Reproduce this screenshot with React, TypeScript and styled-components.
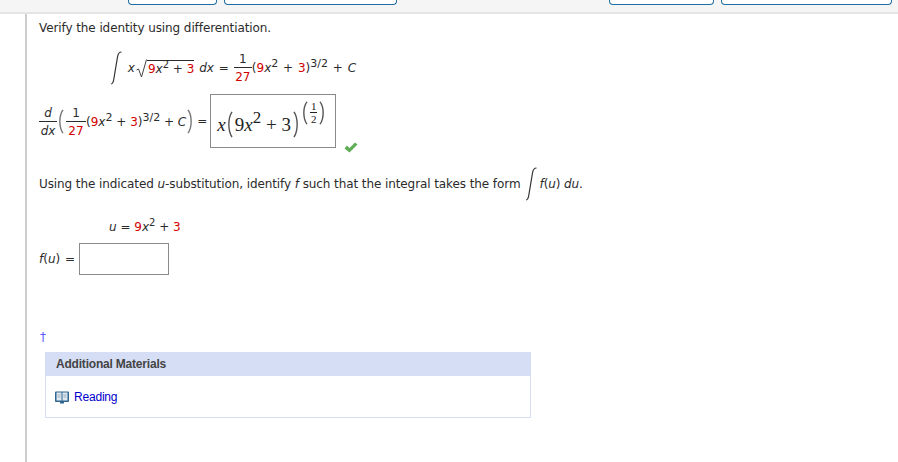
import styled, { createGlobalStyle } from 'styled-components';

const GlobalStyle = createGlobalStyle`
    html, body {
        margin: 0;
        padding: 0;
        background: #fff;
    }
    body {
        font-family: "DejaVu Sans", Verdana, sans-serif;
        font-size: 12px;
        color: #2b2b2b;
    }
`;

const Page = styled.div`
    width: 898px;
    height: 462px;
    overflow: hidden;
    display: flex;
    flex-direction: column;
`;

const TopBar = styled.div`
    height: 12px;
    flex: none;
    display: flex;
    background: #f5f5f5;
    border-bottom: 2px solid #e4e4e4;
`;

const Tab = styled.div<{ $width: number; $gap: number }>`
    width: ${({ $width }) => $width}px;
    height: 5px;
    margin-left: ${({ $gap }) => $gap}px;
    box-sizing: border-box;
    border: 1px solid #1f6fa6;
    border-top: none;
    border-radius: 0 0 4px 4px;
    background: #fff;
`;

const Body = styled.div`
    flex: 1;
    margin-left: 25px;
    border-left: 2px solid #cdcdcd;
    padding-left: 12px;
    display: flex;
    flex-direction: column;
    align-items: flex-start;
`;

const Prompt = styled.div<{ $top: number }>`
    margin-top: ${({ $top }) => $top}px;
    height: 20px;
    line-height: 20px;
    white-space: nowrap;
    display: flex;
    align-items: center;
    letter-spacing: -0.09px;
`;

const MathRow = styled.div<{ $top: number; $left: number; $height: number; $tight?: boolean }>`
    margin-top: ${({ $top }) => $top}px;
    margin-left: ${({ $left }) => $left}px;
    height: ${({ $height }) => $height}px;
    display: flex;
    align-items: center;
    white-space: pre;
    word-spacing: ${({ $tight }) => ($tight ? 0 : 1)}px;
`;

const Derivative = styled.span`
    display: inline-flex;
    align-items: center;
    margin-top: 2px;
    word-spacing: 0;
`;

const EqualSign = styled.span`
    margin-left: 4px;
`;

const Var = styled.i`
    font-style: italic;
`;

const Num = styled.span`
    color: #d40000;
`;

const Sup = styled.sup<{ $small?: boolean }>`
    font-size: ${({ $small }) => ($small ? 10 : 11)}px;
    line-height: 0;
    vertical-align: 5px;
`;

const Frac = styled.span<{ $width: number; $left?: number }>`
    display: inline-flex;
    flex-direction: column;
    align-items: stretch;
    text-align: center;
    line-height: 14px;
    width: ${({ $width }) => $width}px;
    margin-left: ${({ $left }) => $left ?? 0}px;
`;

const Numerator = styled.span`
    border-bottom: 1px solid #2b2b2b;
    padding-bottom: 1px;
`;

const Denominator = styled.span`
    padding-top: 2px;
`;

const RootGroup = styled.span`
    display: inline-flex;
    align-items: center;
    margin-left: 1px;
`;

const Radicand = styled.span`
    border-top: 1px solid #2b2b2b;
    padding: 1px 0 0 1px;
    line-height: 15px;
    word-spacing: 0;
`;

const AnswerBox = styled.div`
    box-sizing: border-box;
    width: 126px;
    height: 54px;
    margin-left: 3px;
    border: 1.5px solid #8a8a8a;
    display: flex;
    align-items: center;
    padding: 8px 0 0 6px;
    font-family: "Liberation Serif", "Times New Roman", serif;
    font-size: 19px;
    color: #222;
    white-space: pre;
    word-spacing: 0;
`;

const AnswerBase = styled.span`
    margin-left: 2px;
`;

const AnswerSup = styled.sup`
    font-size: 17px;
    line-height: 0;
    vertical-align: 8px;
`;

const AnswerExponent = styled.span`
    display: inline-flex;
    align-items: center;
    margin: -24px 0 0 3px;
`;

const HalfFrac = styled.span`
    display: inline-flex;
    flex-direction: column;
    text-align: center;
    font-size: 11px;
    line-height: 12px;
    margin: 0 2px;
`;

const HalfTop = styled.span`
    border-bottom: 1px solid #222;
    padding: 0 1px;
`;

const CheckMark = styled.svg`
    margin: 53px 0 0 8px;
    flex: none;
`;

const Blank = styled.div`
    box-sizing: border-box;
    width: 90px;
    height: 32px;
    margin-left: 4px;
    border: 1px solid #8a8a8a;
    background: #fff;
`;

const Dagger = styled.div`
    margin: 55px 0 0 1px;
    height: 14px;
    line-height: 14px;
    color: #5a5aff;
`;

const Materials = styled.div`
    margin: 8px 0 0 6px;
    width: 486px;
    height: 66px;
    box-sizing: border-box;
    border: 1px solid #d6def6;
    font-family: "Liberation Sans", Arial, sans-serif;
`;

const MaterialsTitle = styled.div`
    height: 23px;
    line-height: 23px;
    padding-left: 10px;
    background: #d6def6;
    font-weight: bold;
    font-size: 12px;
    letter-spacing: -0.2px;
    color: #444;
`;

const MaterialsBody = styled.div`
    display: flex;
    align-items: center;
    gap: 5px;
    padding: 13px 0 0 9px;
`;

const ReadingLink = styled.a`
    color: #0000cc;
    font-size: 12px;
    letter-spacing: -0.2px;
    line-height: 16px;
`;

const Integral = () => (
    <svg width="13" height="34" viewBox="0 0 13 34" style={{ flex: 'none' }}>
        <path d="M1 33 C3 33 3.5 31 4 27 L7.5 6 C8 2.5 9 1 11.5 1" fill="none" stroke="#333" strokeWidth="1.2" />
    </svg>
);

const Paren = ({ side, height, color, gap = 0 }: { side: 'l' | 'r'; height: number; color: string; gap?: number }) => (
    <svg
        width="6"
        height={height}
        viewBox="0 0 6 30"
        preserveAspectRatio="none"
        style={{ flex: 'none', marginLeft: gap }}
    >
        <path
            d={side === 'l' ? 'M5 1 C0.8 8 0.8 22 5 29' : 'M1 1 C5.2 8 5.2 22 1 29'}
            fill="none"
            stroke={color}
            strokeWidth="1.4"
        />
    </svg>
);

const RootSign = () => (
    <svg width="11" height="19" viewBox="0 0 11 19" style={{ flex: 'none', marginTop: 1 }}>
        <path d="M0.5 11 L2.5 10 L5.5 18 L10.5 0.5" fill="none" stroke="#444" strokeWidth="1" />
    </svg>
);

const BookIcon = () => (
    <svg width="14" height="13" viewBox="0 0 14 13">
        <rect x="0" y="0.5" width="14" height="10.5" rx="1" fill="#2f6690" />
        <rect x="1.5" y="1.5" width="5" height="8" fill="#dfe8ef" />
        <rect x="7.5" y="1.5" width="5" height="8" fill="#dfe8ef" />
        <path d="M2.5 4h3M2.5 6h3M8.5 4h3M8.5 6h3" stroke="#8aa2b4" strokeWidth="0.8" />
        <rect x="5" y="11" width="4" height="1.5" fill="#2f6690" />
    </svg>
);

const Polynomial = () => (
    <span>
        (<Num>9</Num><Var>x</Var><Sup>2</Sup> + <Num>3</Num>)<Sup>3/2</Sup> + <Var>C</Var>
    </span>
);

const App = () => (
    <Page>
        <GlobalStyle />
        <TopBar>
            <Tab $width={89} $gap={128} />
            <Tab $width={173} $gap={7} />
            <Tab $width={105} $gap={212} />
            <Tab $width={171} $gap={7} />
        </TopBar>
        <Body>
            <Prompt $top={4}>Verify the identity using differentiation.</Prompt>
            <MathRow $top={11} $left={71} $height={38}>
                <Integral />
                <Var> x</Var>
                <RootGroup>
                    <RootSign />
                    <Radicand><Num>9</Num><Var>x</Var><Sup $small>2</Sup> + <Num>3</Num></Radicand>
                </RootGroup>
                <span> <Var>dx</Var> =</span>
                <Frac $width={18} $left={5}>
                    <Numerator>1</Numerator>
                    <Denominator><Num>27</Num></Denominator>
                </Frac>
                <Polynomial />
            </MathRow>
            <MathRow $top={6} $left={0} $height={55}>
                <Derivative>
                    <Frac $width={18}>
                        <Numerator><Var>d</Var></Numerator>
                        <Denominator><Var>dx</Var></Denominator>
                    </Frac>
                    <Paren side="l" height={25} color="#777" gap={1} />
                    <Frac $width={20} $left={2}>
                        <Numerator>1</Numerator>
                        <Denominator><Num>27</Num></Denominator>
                    </Frac>
                    <Polynomial />
                    <Paren side="r" height={25} color="#777" gap={1} />
                </Derivative>
                <EqualSign>=</EqualSign>
                <AnswerBox>
                    <i>x</i>
                    <Paren side="l" height={27} color="#555" gap={1} />
                    <AnswerBase>9<i>x</i><AnswerSup>2</AnswerSup> + 3</AnswerBase>
                    <Paren side="r" height={27} color="#555" gap={2} />
                    <AnswerExponent>
                        <Paren side="l" height={24} color="#555" />
                        <HalfFrac>
                            <HalfTop>1</HalfTop>
                            <span>2</span>
                        </HalfFrac>
                        <Paren side="r" height={24} color="#555" />
                    </AnswerExponent>
                </AnswerBox>
                <CheckMark width="14" height="11" viewBox="0 0 14 11">
                    <path d="M0.5 6.5 L3 3.5 L5.5 6 L11 0.5 L13.5 2.5 L5.5 10.5 Z" fill="#5fae57" />
                </CheckMark>
            </MathRow>
            <Prompt $top={26}>
                <span>
                    Using the indicated <Var>u</Var>-substitution, identify <Var>f</Var> such that the integral takes the form
                </span>
                <span style={{ width: 5 }} />
                <Integral />
                <span style={{ marginLeft: 1 }}><Var>f</Var>(<Var>u</Var>) <Var>du</Var>.</span>
            </Prompt>
            <MathRow $top={24} $left={70} $height={18} $tight>
                <span><Var>u</Var> = <Num>9</Num><Var>x</Var><Sup $small>2</Sup> + <Num>3</Num></span>
            </MathRow>
            <MathRow $top={7} $left={0} $height={32}>
                <span><Var>f</Var>(<Var>u</Var>) =</span>
                <Blank />
            </MathRow>
            <Dagger>†</Dagger>
            <Materials>
                <MaterialsTitle>Additional Materials</MaterialsTitle>
                <MaterialsBody>
                    <BookIcon />
                    <ReadingLink>Reading</ReadingLink>
                </MaterialsBody>
            </Materials>
        </Body>
    </Page>
);

export default App;
